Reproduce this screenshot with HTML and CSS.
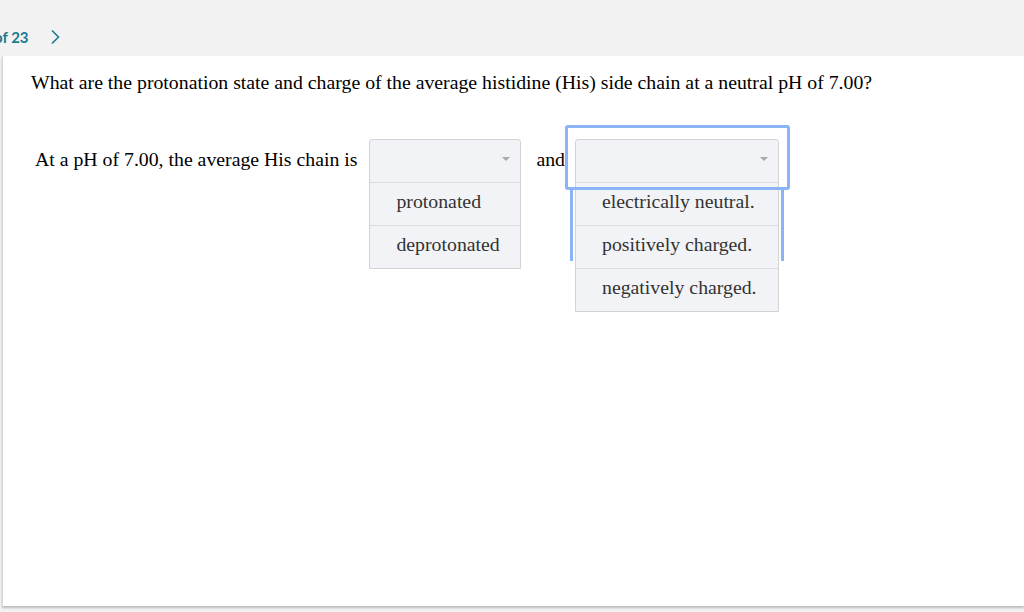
FILE: index.html
```html
<!DOCTYPE html>
<html>
<head>
<meta charset="utf-8">
<link rel="stylesheet" href="styles.css">
</head>
<body>
<div class="topbar">
  <span class="count">of 23</span>
  <svg class="chev" width="10" height="16" viewBox="0 0 10 16"><path d="M2 1.5 L8.5 8 L2 14.5" fill="none" stroke="#1b7a8e" stroke-width="1.6"/></svg>
</div>
<div class="card">
  <p class="question">What are the protonation state and charge of the average histidine (His) side chain at a neutral pH of 7.00?</p>
  <div class="answer">
    <span class="txt lead">At a pH of 7.00, the average His chain is</span>
    <div class="dd dd1">
      <div class="ddhead"><span class="arrow"></span></div>
      <div class="opt">protonated</div>
      <div class="opt">deprotonated</div>
    </div>
    <span class="txt and">and</span>
    <div class="dd dd2">
      <div class="focus"></div>
      <div class="bar barl"></div>
      <div class="bar barr"></div>
      <div class="ddhead"><span class="arrow"></span></div>
      <div class="opt">electrically neutral.</div>
      <div class="opt">positively charged.</div>
      <div class="opt">negatively charged.</div>
    </div>
  </div>
</div>
</body>
</html>
```
FILE: styles.css
```css
html, body {
  margin: 0;
  padding: 0;
  background: #f2f2f2;
  width: 1024px;
  height: 612px;
  overflow: hidden;
}
.topbar {
  height: 56px;
  display: flex;
  align-items: center;
  gap: 21px;
  padding-top: 17px;
  box-sizing: border-box;
}
.count {
  font-family: Lato, "Open Sans", sans-serif;
  font-weight: 700;
  font-size: 15px;
  color: #1b7a8e;
  margin-left: -6px;
}
.chev {
  display: block;
}
.card {
  margin-left: 2px;
  height: 550px;
  background: #fff;
  border-left: 1px solid #d8d8d8;
  box-shadow: 0 2px 2px rgba(0,0,0,0.22);
  box-sizing: border-box;
  padding: 14px 0 0 28px;
  font-family: "Liberation Serif", "Times New Roman", serif;
  color: #000;
}
.question {
  margin: 0;
  font-size: 19.8px;
  line-height: 24px;
}
.answer {
  display: flex;
  align-items: flex-start;
  margin-top: 45px;
  font-size: 19.8px;
}
.txt {
  line-height: 40px;
}
.lead {
  margin-left: 4px;
}
.dd {
  position: relative;
  background: #f2f3f7;
  border: 1px solid #d3d3d6;
  border-radius: 3px 3px 0 0;
  color: #333;
}
.dd1 {
  width: 150px;
  margin-left: 12px;
}
.and {
  margin-left: 15px;
}
.dd2 {
  width: 202px;
  margin-left: 10px;
}
.ddhead {
  height: 42px;
  position: relative;
}
.arrow {
  position: absolute;
  right: 10px;
  top: 17px;
  width: 0;
  height: 0;
  border-left: 4px solid transparent;
  border-right: 4px solid transparent;
  border-top: 4px solid #aaa;
}
.opt {
  height: 42px;
  line-height: 36px;
  border-top: 1px solid #dcdce0;
  padding-left: 26px;
}
.focus {
  position: absolute;
  left: -11px;
  top: -15px;
  width: 219px;
  height: 59px;
  border: 3px solid #8ab4f6;
  border-radius: 3px;
  pointer-events: none;
}
.bar {
  position: absolute;
  top: 50px;
  width: 3px;
  height: 71px;
  background: #8ab4f6;
}
.barl {
  left: -6px;
}
.barr {
  right: -6px;
}
```
